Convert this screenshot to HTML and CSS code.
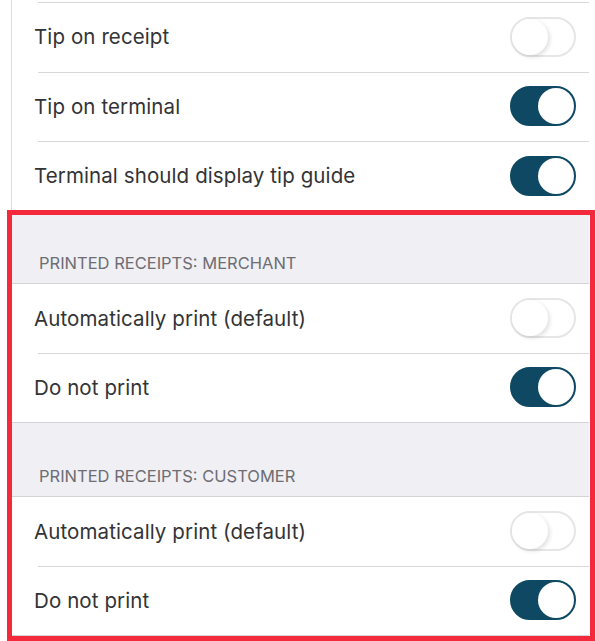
FILE: index.html
```html
<!DOCTYPE html>
<html lang="en">

<head>
    <meta charset="UTF-8">
    <meta name="viewport" content="width=device-width, initial-scale=1.0">
    <title>Tips and receipts</title>
    <link rel="stylesheet" href="styles.css">
</head>

<body>

    <div id="settings">
        <div class="group group-top">
            <div class="row inset">
                <span class="label">Tip on receipt</span>
                <span class="switch"></span>
            </div>
            <div class="row inset">
                <span class="label">Tip on terminal</span>
                <span class="switch on"></span>
            </div>
            <div class="row inset">
                <span class="label">Terminal should display tip guide</span>
                <span class="switch on"></span>
            </div>
        </div>

        <div id="highlight">
            <div class="section-title">PRINTED RECEIPTS: MERCHANT</div>
            <div class="group">
                <div class="row">
                    <span class="label">Automatically print (default)</span>
                    <span class="switch"></span>
                </div>
                <div class="row inset">
                    <span class="label">Do not print</span>
                    <span class="switch on"></span>
                </div>
            </div>

            <div class="section-title">PRINTED RECEIPTS: CUSTOMER</div>
            <div class="group">
                <div class="row">
                    <span class="label">Automatically print (default)</span>
                    <span class="switch"></span>
                </div>
                <div class="row inset">
                    <span class="label">Do not print</span>
                    <span class="switch on"></span>
                </div>
            </div>
        </div>
    </div>

</body>

</html>
```

FILE: styles.css
```css
body,
html {
    margin: 0;
    padding: 0;
    overflow: hidden;
    background: #fff;
}

#settings {
    width: 595px;
    height: 641px;
    font-family: "Inter", "Liberation Sans", sans-serif;
    color: #333336;
}

.group {
    background: #fff;
    border-bottom: 1px solid #d4d4d8;
}

.group-top {
    margin-left: 11px;
    width: 577px;
    padding-top: 2px;
    border-left: 1px solid #dcdcdc;
    border-bottom: none;
    height: 208px;
}

.row {
    height: 69.5px;
    box-sizing: border-box;
    display: flex;
    align-items: center;
    justify-content: space-between;
    padding: 0 13px 0 22px;
    border-top: 1px solid #d4d4d8;
}

.row.inset {
    border-top: none;
    background-image: linear-gradient(#d8d8dc, #d8d8dc);
    background-size: calc(100% - 26px) 1px;
    background-position: right top;
    background-repeat: no-repeat;
}

.label {
    font-size: 20.5px;
    letter-spacing: 0.1px;
}

.switch {
    width: 66px;
    height: 40px;
    box-sizing: border-box;
    border-radius: 20px;
    border: 2px solid #e6e6e6;
    background: #fff;
    position: relative;
}

.switch::after {
    content: "";
    position: absolute;
    top: 0;
    left: 0;
    width: 36px;
    height: 36px;
    border-radius: 50%;
    background: #fff;
    box-shadow: 2px 2px 4px rgba(0, 0, 0, 0.12);
}

.switch.on {
    background: #0e4862;
    border-color: #0e4862;
}

.switch.on::after {
    left: auto;
    right: 0;
    top: 0;
    box-shadow: none;
}

#highlight {
    position: relative;
    margin-left: 12px;
    width: 577px;
    background: #efeff4;
}

/* red callout frame drawn over the two receipt sections */
#highlight::after {
    content: "";
    position: absolute;
    top: 0;
    left: -5px;
    right: -6px;
    bottom: -5px;
    border: 5px solid #f42a3c;
    pointer-events: none;
}

.section-title {
    height: 73px;
    box-sizing: border-box;
    padding: 0 0 10px 27px;
    display: flex;
    align-items: flex-end;
    font-size: 16.5px;
    color: #6d6d72;
}
```
